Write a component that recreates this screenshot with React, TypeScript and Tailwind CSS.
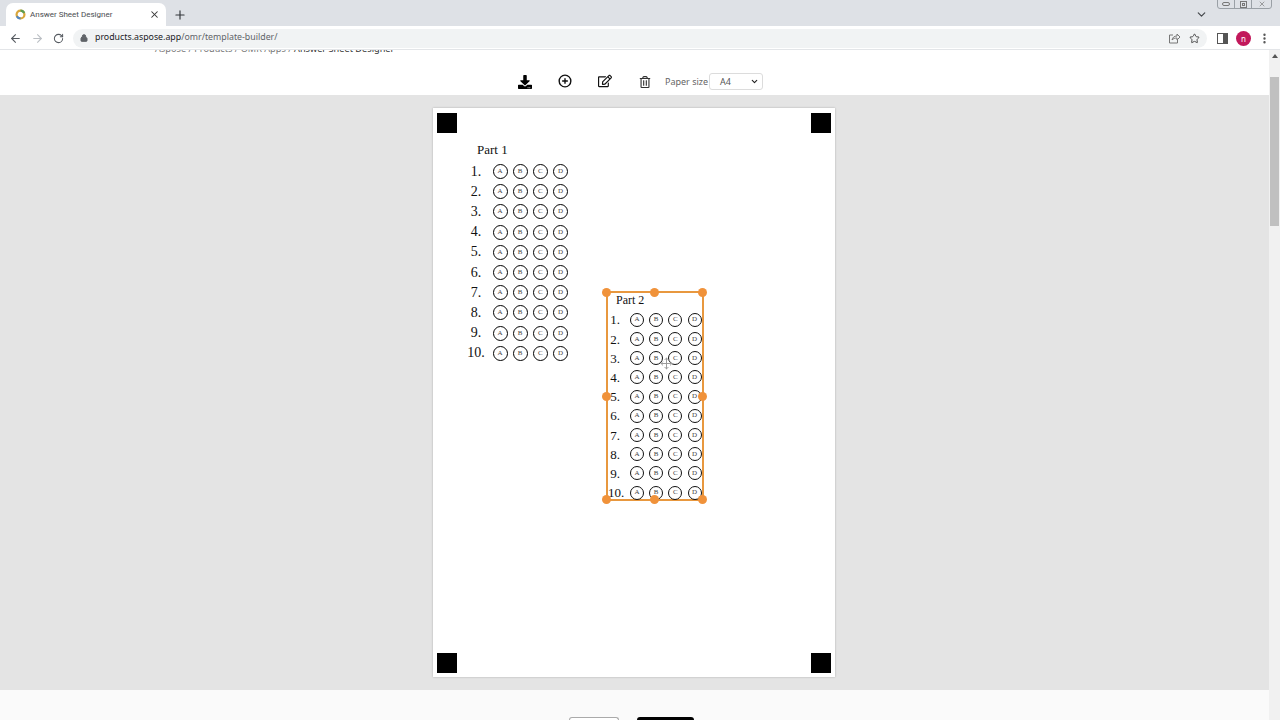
import { ArrowLeft, ArrowRight, RotateCw, Lock, Star, ChevronDown, Plus, X, EllipsisVertical, CirclePlus, Move } from 'lucide-react';
import { FaDownload, FaRegEdit, FaRegTrashAlt } from 'react-icons/fa';

const options = ['A', 'B', 'C', 'D'];
const nums = [1, 2, 3, 4, 5, 6, 7, 8, 9, 10];

function Bubble({ label, small }: { label: string; small?: boolean }) {
	return (
		<div
			className={
				small
					? 'w-[14px] h-[14px] rounded-full border-[1.3px] border-[#111] flex items-center justify-center text-[7px] text-[#444] leading-none'
					: 'w-[15px] h-[15px] rounded-full border-[1.3px] border-black flex items-center justify-center text-[7px] text-[#444] leading-none'
			}
		>
			{label}
		</div>
	);
}

function Handle({ className }: { className: string }) {
	return <div className={'absolute w-[9px] h-[9px] rounded-full bg-[#f0923a] ' + className} />;
}

function Marker({ className }: { className: string }) {
	return <div className={'absolute w-[20px] h-[20px] bg-black ' + className} />;
}

export default function App() {
	return (
		<div className="relative w-[1280px] h-[720px] overflow-hidden flex flex-col bg-white font-['Noto_Sans',sans-serif]">
			{/* tab strip */}
			<div className="relative h-[26px] shrink-0 bg-[#dee1e6] flex items-end pl-[6px]">
				<div className="w-[160px] h-[23px] bg-white rounded-t-[7px] flex items-center pl-[9px] pr-[6px]">
					<svg width="11" height="11" viewBox="0 0 12 12" className="shrink-0">
						<circle cx="6" cy="6" r="4.3" fill="none" stroke="#d9a63a" strokeWidth="2.4" />
						<path d="M6 1.7a4.3 4.3 0 0 1 4 2.7" fill="none" stroke="#5b9c52" strokeWidth="2.4" />
						<path d="M2 8a4.3 4.3 0 0 0 4 2.3" fill="none" stroke="#4f86c6" strokeWidth="2.4" />
					</svg>
					<span className="ml-[4px] text-[8px] font-['Roboto',sans-serif] text-[#4a4d51] whitespace-nowrap">Answer Sheet Designer</span>
					<X size={11} strokeWidth={2.2} className="ml-auto text-[#333]" />
				</div>
				<Plus size={14} strokeWidth={2} className="ml-[7px] mb-[4px] text-[#33363a]" />
				<ChevronDown size={13} strokeWidth={2.2} className="ml-auto mr-[72px] mb-[5px] text-[#44474b]" />
				<div className="absolute top-[-1px] right-[8px] w-[55px] h-[10px] border border-[#9aa0a6] rounded-b-[3px] flex text-[#777]">
					<div className="w-[17px] border-r border-[#9aa0a6] flex items-center justify-center">
						<div className="w-[8px] h-[4px] border border-[#777] rounded-[2px]" />
					</div>
					<div className="w-[17px] border-r border-[#9aa0a6] flex items-center justify-center">
						<div className="w-[7px] h-[7px] border border-[#777] flex items-center justify-center">
							<div className="w-[3px] h-[3px] border border-[#777]" />
						</div>
					</div>
					<div className="flex-1 flex items-center justify-center">
						<X size={8} strokeWidth={2} />
					</div>
				</div>
			</div>

			{/* address bar */}
			<div className="h-[24px] shrink-0 bg-white border-b border-[#e3e5e8] flex items-center pt-[1px]">
				<ArrowLeft size={13} strokeWidth={2} className="ml-[9px] text-[#555a60]" />
				<ArrowRight size={13} strokeWidth={2} className="ml-[9px] text-[#bbbfc4]" />
				<RotateCw size={11} strokeWidth={2.2} className="ml-[9px] text-[#555a60]" />
				<div className="ml-[9px] w-[1134px] h-[19px] rounded-full bg-[#f1f3f4] flex items-center shrink-0 -mr-[38px]">
					<Lock size={8} strokeWidth={3} fill="#5f6368" className="ml-[7px] text-[#5f6368]" />
					<span className="ml-[7px] text-[8.8px] whitespace-nowrap text-[#5f6368]">
						<span className="text-[#202124]">products.aspose.app</span>/omr/template-builder/
					</span>
					<svg width="13" height="12" viewBox="0 0 13 12" fill="none" stroke="#777" strokeWidth="1" className="ml-auto mr-[8px]">
						<path d="M5 3H1.5v8h8V8" />
						<path d="M4 8c.4-2.6 2.4-4 5-4V2l3 3-3 3V6C7 6 5.200 6.600 4 8z" />
					</svg>
					<Star size={11} strokeWidth={2} className="mr-[7px] text-[#444]" />
				</div>
			</div>

			<div className="flex-1 min-h-0 flex">
				<div className="flex-1 min-w-0 flex flex-col">
					{/* page toolbar */}
					<div className="relative h-[45px] shrink-0 bg-white overflow-hidden flex items-center pl-[518px] pt-[18px]">
						<div className="absolute top-[-8px] left-[155px] text-[9.2px] text-[#777] whitespace-nowrap">
							Aspose / Products / OMR Apps / <span className="text-[#333]">Answer Sheet Designer</span>
						</div>
						<FaDownload size={14} className="text-black" />
						<CirclePlus size={14} strokeWidth={2.4} className="ml-[26px] mt-[-1px] text-[#111]" />
						<FaRegEdit size={14} className="ml-[26px] mt-[-2px] text-[#111]" />
						<FaRegTrashAlt size={12} className="ml-[27px] text-[#333]" />
						<span className="ml-[14px] text-[9px] text-[#666] whitespace-nowrap">Paper size</span>
						<div className="ml-[1px] w-[54px] h-[17px] border border-[#dcdcdc] rounded-[3px] flex items-center pl-[10px] pr-[3px] text-[9px] text-[#555]">
							A4
							<ChevronDown size={9} strokeWidth={3} className="ml-auto text-[#222]" />
						</div>
					</div>

					{/* canvas */}
					<div className="h-[595px] shrink-0 bg-[#e4e4e4] pt-[13px] pl-[433px]">
						<div className="relative w-[402px] h-[569px] bg-white shadow-[0_0_2px_rgba(0,0,0,0.25)] font-['Liberation_Serif',serif] text-[#111]">
							<Marker className="left-[4px] top-[5px]" />
							<Marker className="left-[378px] top-[5px]" />
							<Marker className="left-[4px] top-[545px]" />
							<Marker className="left-[378px] top-[545px]" />

							<div className="absolute left-[31px] top-[34px] w-[110px]">
								<div className="pl-[13px] h-[16px] text-[13px] leading-[16px]">Part 1</div>
								<div className="mt-[3.5px] flex flex-col">
									{nums.map((n) => (
										<div key={n} className="h-[20.2px] flex items-center">
											<div className="w-[24px] text-center text-[14px] leading-none whitespace-nowrap">{n}.</div>
											<div className="ml-[4.5px] flex gap-[5.2px]">
												{options.map((o) => (
													<Bubble key={o} label={o} />
												))}
											</div>
										</div>
									))}
								</div>
							</div>

							{/* selected block */}
							<div className="absolute left-[173px] top-[183px] w-[98px] h-[210px] border-2 border-[#e8983f]">
								<div className="pl-[8px] h-[16px] text-[12px] leading-[14px]">Part 2</div>
								<div className="mt-[1.3px] flex flex-col">
									{nums.map((n) => (
										<div key={n} className="h-[19.2px] flex items-center">
											<div className="w-[14px] text-center text-[13px] leading-none whitespace-nowrap">{n}.</div>
											<div className="ml-[8px] flex gap-[5.2px]">
												{options.map((o) => (
													<Bubble key={o} label={o} small />
												))}
											</div>
										</div>
									))}
								</div>
								<Handle className="left-[-6px] top-[-5px]" />
								<Handle className="left-[42px] top-[-5px]" />
								<Handle className="right-[-5px] top-[-5px]" />
								<Handle className="left-[-6px] top-[99px]" />
								<Handle className="right-[-5px] top-[99px]" />
								<Handle className="left-[-6px] bottom-[-5px]" />
								<Handle className="left-[42px] bottom-[-5px]" />
								<Handle className="right-[-5px] bottom-[-5px]" />
								<Move size={13} strokeWidth={1.8} className="absolute left-[52px] top-[64px] text-[#999]" />
							</div>
						</div>
					</div>

					{/* below the canvas */}
					<div className="flex-1 bg-[#fafafa] flex items-end pl-[569px] gap-[18px]">
						<div className="w-[50px] h-[3px] bg-white border border-b-0 border-[#aaa] rounded-t-[3px]" />
						<div className="w-[57px] h-[3px] bg-black rounded-t-[3px]" />
					</div>
				</div>

				{/* scrollbar */}
				<div className="w-[11px] shrink-0 bg-[#f1f1f1] flex flex-col items-center">
					<div className="h-[27px] pt-[4px] flex justify-center">
						<div className="w-0 h-0 border-x-[3px] border-x-transparent border-b-[4px] border-b-[#555]" />
					</div>
					<div className="w-[9px] h-[149px] bg-[#c0c0c0]" />
				</div>
			</div>

			{/* side panel button, avatar and menu on the address bar */}
			<div className="absolute left-[1217px] top-[33px] w-[11px] h-[11px] border-[1.5px] border-[#555] flex">
				<div className="ml-auto w-[4px] h-full bg-[#555]" />
			</div>
			<div className="absolute left-[1236px] top-[31px] w-[15px] h-[15px] rounded-full bg-[#c2185b] flex items-center justify-center text-[8px] text-white leading-none">n</div>
			<EllipsisVertical size={13} strokeWidth={2.4} className="absolute left-[1258px] top-[32px] text-[#555]" />
		</div>
	);
}
